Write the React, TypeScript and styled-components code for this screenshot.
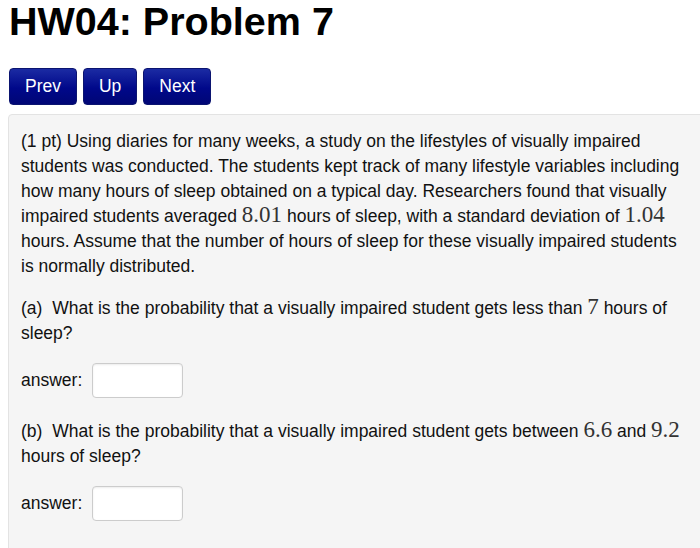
import React from 'react';
import styled, { createGlobalStyle } from 'styled-components';

const GlobalStyle = createGlobalStyle`
  html, body {
    margin: 0;
    padding: 0;
    background: #ffffff;
    overflow: hidden;
  }
  body {
    font-family: "Liberation Sans", Arial, sans-serif;
    color: #111;
  }
`;

const Page = styled.div`
  width: 700px;
  height: 548px;
  overflow: hidden;
  padding-left: 8px;
  box-sizing: border-box;
`;

const Title = styled.h1`
  margin: 0;
  padding: 0 0 0 1px;
  font-size: 39.5px;
  font-weight: bold;
  line-height: 42px;
  color: #000;
`;

const NavBar = styled.nav`
  display: flex;
  gap: 6px;
  margin: 26px 0 9px 1px;
`;

const NavButton = styled.button`
  height: 37px;
  padding: 0 15px;
  border: 1px solid #0b1470;
  border-radius: 4px;
  background: linear-gradient(#1b2ba3, #00088a 55%, #000675);
  color: #fff;
  font-family: "Liberation Sans", Arial, sans-serif;
  font-size: 17.5px;
  cursor: pointer;
`;

const Panel = styled.section`
  width: 720px;
  min-height: 460px;
  box-sizing: border-box;
  background: #f5f5f5;
  border: 1px solid #e3e3e3;
  border-radius: 4px;
  padding: 14px 0 0 12px;
  font-size: 17.5px;
  line-height: 25px;
`;

const Para = styled.p`
  margin: 0 0 17px 0;
  width: 670px;
`;

const Num = styled.span`
  font-family: "Liberation Serif", "Times New Roman", serif;
  font-size: 23px;
  line-height: 20px;
  color: #333;
`;

const Label = styled.span`
  margin-right: 5px;
`;

const AnswerRow = styled.div`
  display: flex;
  align-items: center;
  gap: 10px;
  margin: 2px 0 21px 0;
`;

const Answer = styled.input`
  width: 91px;
  height: 35px;
  box-sizing: border-box;
  border: 1px solid #cccccc;
  border-radius: 4px;
  background: #fff;
  box-shadow: inset 0 1px 2px rgba(0, 0, 0, 0.08);
  outline: none;
`;

export default function App() {
  return (
    <>
      <GlobalStyle />
      <Page>
        <Title>HW04: Problem 7</Title>
        <NavBar>
          <NavButton>Prev</NavButton>
          <NavButton>Up</NavButton>
          <NavButton>Next</NavButton>
        </NavBar>
        <Panel>
          <Para>
            (1 pt) Using diaries for many weeks, a study on the lifestyles of visually impaired
            students was conducted. The students kept track of many lifestyle variables including
            how many hours of sleep obtained on a typical day. Researchers found that visually
            impaired students averaged <Num>8.01</Num> hours of sleep, with a standard deviation of{' '}
            <Num>1.04</Num> hours. Assume that the number of hours of sleep for these visually
            impaired students is normally distributed.
          </Para>
          <Para>
            <Label>(a)</Label> What is the probability that a visually impaired student gets less
            than <Num>7</Num> hours of sleep?
          </Para>
          <AnswerRow>
            <span>answer:</span>
            <Answer type="text" />
          </AnswerRow>
          <Para>
            <Label>(b)</Label> What is the probability that a visually impaired student gets between{' '}
            <Num>6.6</Num> and <Num>9.2</Num> hours of sleep?
          </Para>
          <AnswerRow>
            <span>answer:</span>
            <Answer type="text" />
          </AnswerRow>
        </Panel>
      </Page>
    </>
  );
}
